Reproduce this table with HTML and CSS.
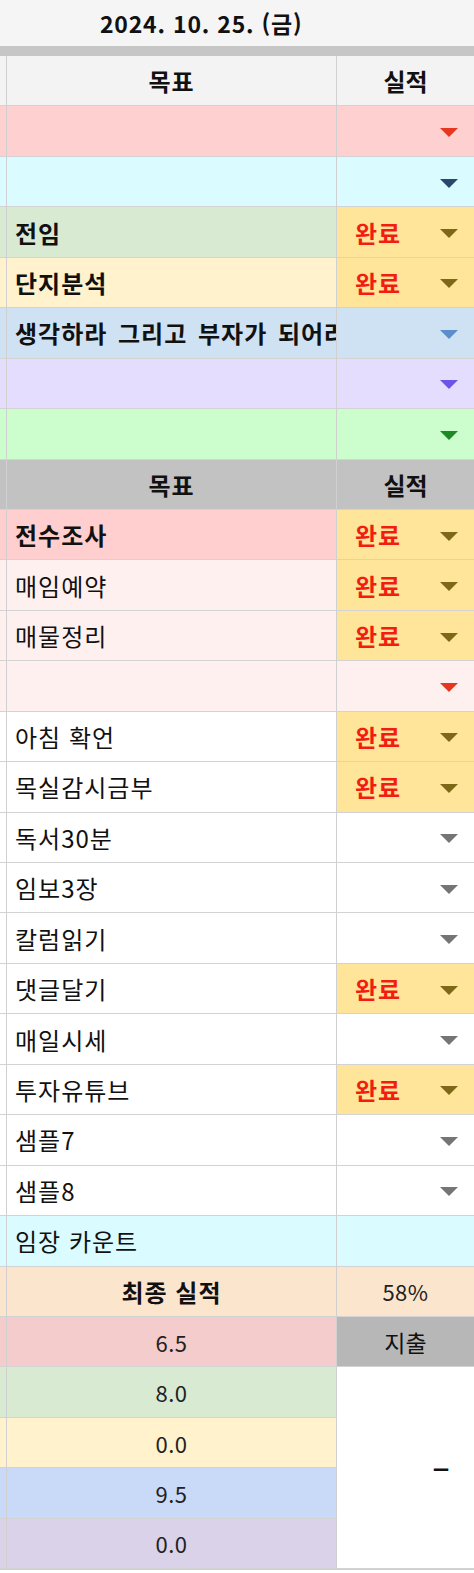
FILE: index.html
```html
<!DOCTYPE html>
<html lang="ko">
<head>
<meta charset="utf-8">
<title>2024. 10. 25. (금)</title>
<link rel="stylesheet" href="styles.css">
</head>
<body>
<div class="page">
  <div class="date-row">2024. 10. 25. (금)</div>
  <div class="band"></div>
  <div class="sheet">
    <div class="stub bg-head"></div><div class="goal bg-head bold center">목표</div><div class="val bg-head bold center">실적</div>

    <div class="stub bg-pink"></div><div class="goal bg-pink"></div><div class="val bg-pink"><span></span><i class="arr a-red"></i></div>
    <div class="stub bg-cyan"></div><div class="goal bg-cyan"></div><div class="val bg-cyan"><span></span><i class="arr a-navy"></i></div>
    <div class="stub bg-lgreen"></div><div class="goal bg-lgreen bold">전임</div><div class="val bg-done"><span class="done">완료</span><i class="arr a-olive"></i></div>
    <div class="stub bg-cream"></div><div class="goal bg-cream bold">단지분석</div><div class="val bg-done"><span class="done">완료</span><i class="arr a-olive"></i></div>
    <div class="stub bg-blue"></div><div class="goal bg-blue bold wide">생각하라 그리고 부자가 되어라</div><div class="val bg-blue"><span></span><i class="arr a-steel"></i></div>
    <div class="stub bg-purple"></div><div class="goal bg-purple"></div><div class="val bg-purple"><span></span><i class="arr a-violet"></i></div>
    <div class="stub bg-green"></div><div class="goal bg-green"></div><div class="val bg-green"><span></span><i class="arr a-green"></i></div>

    <div class="stub bg-gray"></div><div class="goal bg-gray bold center">목표</div><div class="val bg-gray bold center">실적</div>

    <div class="stub bg-rose"></div><div class="goal bg-rose bold">전수조사</div><div class="val bg-done"><span class="done">완료</span><i class="arr a-olive"></i></div>
    <div class="stub bg-blush"></div><div class="goal bg-blush">매임예약</div><div class="val bg-done"><span class="done">완료</span><i class="arr a-olive"></i></div>
    <div class="stub bg-blush"></div><div class="goal bg-blush">매물정리</div><div class="val bg-done"><span class="done">완료</span><i class="arr a-olive"></i></div>
    <div class="stub bg-blush"></div><div class="goal bg-blush"></div><div class="val bg-blush"><span></span><i class="arr a-red"></i></div>

    <div class="stub"></div><div class="goal">아침 확언</div><div class="val bg-done"><span class="done">완료</span><i class="arr a-olive"></i></div>
    <div class="stub"></div><div class="goal">목실감시금부</div><div class="val bg-done"><span class="done">완료</span><i class="arr a-olive"></i></div>
    <div class="stub"></div><div class="goal">독서30분</div><div class="val"><span></span><i class="arr a-gray"></i></div>
    <div class="stub"></div><div class="goal">임보3장</div><div class="val"><span></span><i class="arr a-gray"></i></div>
    <div class="stub"></div><div class="goal">칼럼읽기</div><div class="val"><span></span><i class="arr a-gray"></i></div>
    <div class="stub"></div><div class="goal">댓글달기</div><div class="val bg-done"><span class="done">완료</span><i class="arr a-olive"></i></div>
    <div class="stub"></div><div class="goal">매일시세</div><div class="val"><span></span><i class="arr a-gray"></i></div>
    <div class="stub"></div><div class="goal">투자유튜브</div><div class="val bg-done"><span class="done">완료</span><i class="arr a-olive"></i></div>
    <div class="stub"></div><div class="goal">샘플7</div><div class="val"><span></span><i class="arr a-gray"></i></div>
    <div class="stub"></div><div class="goal">샘플8</div><div class="val"><span></span><i class="arr a-gray"></i></div>

    <div class="stub bg-cyan"></div><div class="goal bg-cyan">임장 카운트</div><div class="val bg-cyan"></div>
    <div class="stub bg-peach"></div><div class="goal bg-peach bold center">최종 실적</div><div class="val bg-peach center num">58%</div>
    <div class="stub bg-s-red"></div><div class="goal bg-s-red center num">6.5</div><div class="val bg-spend center">지출</div>
    <div class="stub bg-s-green"></div><div class="goal bg-s-green center num">8.0</div>
    <div class="val merged"><span class="dash">–</span></div>
    <div class="stub bg-s-yellow"></div><div class="goal bg-s-yellow center num">0.0</div>
    <div class="stub bg-s-blue"></div><div class="goal bg-s-blue center num">9.5</div>
    <div class="stub bg-s-purple"></div><div class="goal bg-s-purple center num">0.0</div>
  </div>
</div>
</body>
</html>
```

FILE: styles.css
```css
html, body {
  margin: 0;
  padding: 0;
  background: #ffffff;
}
body {
  font-family: "Noto Sans CJK KR", "Noto Sans", "DejaVu Sans", sans-serif;
  color: #111;
}
.page {
  width: 474px;
}
.date-row {
  height: 46px;
  background: #f5f5f5;
  font-size: 23px;
  font-weight: 700;
  line-height: 46px;
  padding-left: 100px;
  box-sizing: border-box;
  letter-spacing: 0.8px;
}
.band {
  height: 10px;
  background: #c6c6c6;
}
.sheet {
  display: grid;
  grid-template-columns: 7px 330px 137px;
  grid-auto-rows: 50.45px;
  border-bottom: 1px solid #d0d0d0;
}
.stub, .goal, .val {
  box-sizing: border-box;
  border-bottom: 1px solid #d3d3d3;
  background: #ffffff;
}
.stub {
  border-right: 1px solid #d0d0d0;
}
.goal {
  border-right: 1px solid #d0d0d0;
  display: flex;
  align-items: center;
  padding-left: 8px;
  font-size: 24px;
  white-space: nowrap;
  overflow: hidden;
  letter-spacing: 1px;
}
.wide {
  word-spacing: 3px;
}
.val {
  display: flex;
  align-items: center;
  justify-content: space-between;
  padding: 0 16px 0 18px;
  font-size: 24px;
}
.center {
  justify-content: center;
  padding-left: 0;
  padding-right: 0;
}
.bold {
  font-weight: 700;
}
.num {
  font-size: 22px;
  letter-spacing: 0.5px;
  color: #222;
}
.done {
  color: #f21d10;
  font-weight: 700;
  letter-spacing: 1px;
}
.arr {
  display: block;
  width: 0;
  height: 0;
  border-left: 9px solid transparent;
  border-right: 9px solid transparent;
  border-top: 9px solid #777;
  margin-top: 3px;
}
.a-red { border-top-color: #e8351f; }
.a-navy { border-top-color: #28496b; }
.a-olive { border-top-color: #7d6817; }
.a-steel { border-top-color: #5c8ecb; }
.a-violet { border-top-color: #6a55e6; }
.a-green { border-top-color: #1d8a26; }
.a-gray { border-top-color: #757575; }

.bg-head { background: #f3f3f3; }
.bg-pink { background: #ffd0d0; }
.bg-cyan { background: #dafbff; }
.bg-lgreen { background: #d9ead3; }
.bg-cream { background: #fff2cc; }
.bg-blue { background: #cfe2f3; }
.bg-purple { background: #e4ddfd; }
.bg-green { background: #ccfdcc; }
.bg-gray { background: #c2c2c2; }
.bg-rose { background: #ffcfcf; }
.bg-blush { background: #fff0f0; }
.bg-done { background: #ffe599; }
.bg-peach { background: #fce5cd; }
.bg-s-red { background: #f4cccc; }
.bg-s-green { background: #d9ead3; }
.bg-s-yellow { background: #fff2cc; }
.bg-s-blue { background: #c9daf8; }
.bg-s-purple { background: #d9d2e9; }
.bg-spend { background: #b7b7b7; font-size: 23px; }
.merged {
  grid-column: 3;
  grid-row: span 4;
  justify-content: flex-end;
  padding-right: 24px;
}
.dash {
  font-family: "DejaVu Sans", sans-serif;
  font-size: 36px;
  font-weight: 400;
  line-height: 1;
  color: #111;
}
```
